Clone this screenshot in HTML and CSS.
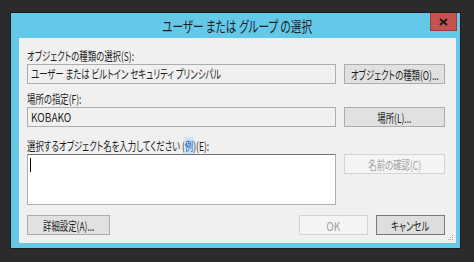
FILE: index.html
```html
<!DOCTYPE html>
<html lang="ja">
<head>
    <meta charset="UTF-8">
    <title>ユーザー または グループ の選択</title>
    <link rel="stylesheet" href="styles.css">
</head>
<body>

<div class="window">
    <!-- Title bar -->
    <div class="titlebar">
        <span class="title">ユーザー または グループ の選択</span>
        <button class="close-btn" title="閉じる">
            <svg width="9" height="8" viewBox="0 0 9 8">
                <path d="M1 1 L8 7 M8 1 L1 7" stroke="#1a1a1a" stroke-width="2"/>
            </svg>
        </button>
    </div>

    <!-- Dialog body -->
    <div class="panel">
        <div class="label"><span class="txt">オブジェクトの種類の選択(S):</span></div>
        <div class="row">
            <div class="field readonly"><span class="txt">ユーザー または ビルトイン セキュリティ プリンシパル</span></div>
            <button class="btn"><span class="txt">オブジェクトの種類(O)...</span></button>
        </div>

        <div class="label gap-small"><span class="txt">場所の指定(F):</span></div>
        <div class="row">
            <div class="field readonly"><span class="txt latin">KOBAKO</span></div>
            <button class="btn"><span class="txt">場所(L)...</span></button>
        </div>

        <div class="label gap-large"><span class="txt">選択するオブジェクト名を入力してください (<a href="#" class="link">例</a>)(E):</span></div>
        <div class="row top">
            <div class="field names"><span class="caret"></span></div>
            <button class="btn disabled"><span class="txt">名前の確認(C)</span></button>
        </div>

        <div class="footer">
            <button class="btn wide"><span class="txt">詳細設定(A)...</span></button>
            <div class="footer-right">
                <button class="btn small disabled"><span class="txt latin">OK</span></button>
                <button class="btn small default"><span class="txt">キャンセル</span></button>
            </div>
        </div>

        <svg class="grip" width="6" height="6" viewBox="0 0 6 6">
            <rect x="4" y="0" width="1" height="1" fill="#a8a8a8"/>
            <rect x="2" y="2" width="1" height="1" fill="#a8a8a8"/>
            <rect x="4" y="2" width="1" height="1" fill="#a8a8a8"/>
            <rect x="0" y="4" width="1" height="1" fill="#a8a8a8"/>
            <rect x="2" y="4" width="1" height="1" fill="#a8a8a8"/>
            <rect x="4" y="4" width="1" height="1" fill="#a8a8a8"/>
        </svg>
    </div>
</div>

</body>
</html>
```

FILE: styles.css
```css
body {
    margin: 0;
    padding: 12px 0 0 10px;
    background-color: #2b2b2b;
    font-family: "Noto Sans CJK JP", "Liberation Sans", sans-serif;
    font-size: 12px;
    font-feature-settings: "palt";
    color: #1e1e1e;
    height: 262px;
    box-sizing: border-box;
    overflow: hidden;
}
/* Meiryo UI is much narrower than Noto, so text is squeezed horizontally */
.txt {
    display: inline-block;
    white-space: nowrap;
    transform: scaleX(0.7);
    transform-origin: left center;
}
.txt.latin {
    transform: scaleX(0.84);
}
.window {
    width: 451px;
    height: 237px;
    box-sizing: border-box;
    border: 1px solid #1c1c1c;
    background-color: #64c8e9;
    display: flex;
    flex-direction: column;
}
.titlebar {
    position: relative;
    height: 25px;
    display: flex;
    align-items: center;
    justify-content: center;
}
.title {
    display: inline-block;
    white-space: nowrap;
    font-size: 15px;
    color: #1f1f1f;
    padding-left: 4px;
    transform: scaleX(0.71);
}
.close-btn {
    position: absolute;
    top: 0;
    right: 3px;
    width: 27px;
    height: 18px;
    padding: 0;
    background-color: #c8524f;
    border: 1px solid #9a3d3b;
    border-top: none;
    display: flex;
    align-items: center;
    justify-content: center;
}
.panel {
    position: relative;
    flex: 1;
    margin: 0 4px 5px 8px;
    background-color: #f0f0f0;
    padding: 10px 11px 0 8px;
}
.label {
    height: 16px;
    line-height: 16px;
    white-space: nowrap;
}
.gap-small {
    margin-top: 7px;
}
.gap-large {
    margin-top: 11px;
}
.link {
    color: #1565c0;
    background-color: #cfe3f7;
    text-decoration: none;
}
.row {
    display: flex;
    gap: 8px;
    align-items: center;
}
.row.top {
    align-items: flex-start;
}
.field {
    width: 309px;
    height: 20px;
    box-sizing: border-box;
    border: 1px solid #abadb3;
    padding: 0 3px;
    line-height: 18px;
    white-space: nowrap;
    overflow: hidden;
}
.field.readonly {
    background-color: #f0f0f0;
}
.field.names {
    height: 51px;
    background-color: #fff;
    border-top-color: #707070;
    padding: 3px 2px;
}
.caret {
    display: block;
    width: 1px;
    height: 14px;
    background-color: #000;
}
.btn {
    font-family: inherit;
    font-size: 12px;
    font-feature-settings: "palt";
    width: 101px;
    height: 20px;
    padding: 0;
    box-sizing: border-box;
    background-color: #e1e1e1;
    border: 1px solid #adadad;
    color: #1e1e1e;
    display: flex;
    align-items: center;
    justify-content: center;
}
.btn .txt {
    transform-origin: center center;
}
.btn.disabled {
    background-color: #f4f4f4;
    border-color: #d5d5d5;
    color: #a2a2a2;
}
.btn.default {
    border-color: #7a7a7a;
    background-color: #dedede;
}
.btn.wide {
    width: 83px;
}
.btn.small {
    width: 69px;
}
.footer {
    display: flex;
    justify-content: space-between;
    margin-top: 10px;
}
.footer-right {
    display: flex;
    gap: 8px;
}
.grip {
    position: absolute;
    right: 2px;
    bottom: 2px;
}
```
